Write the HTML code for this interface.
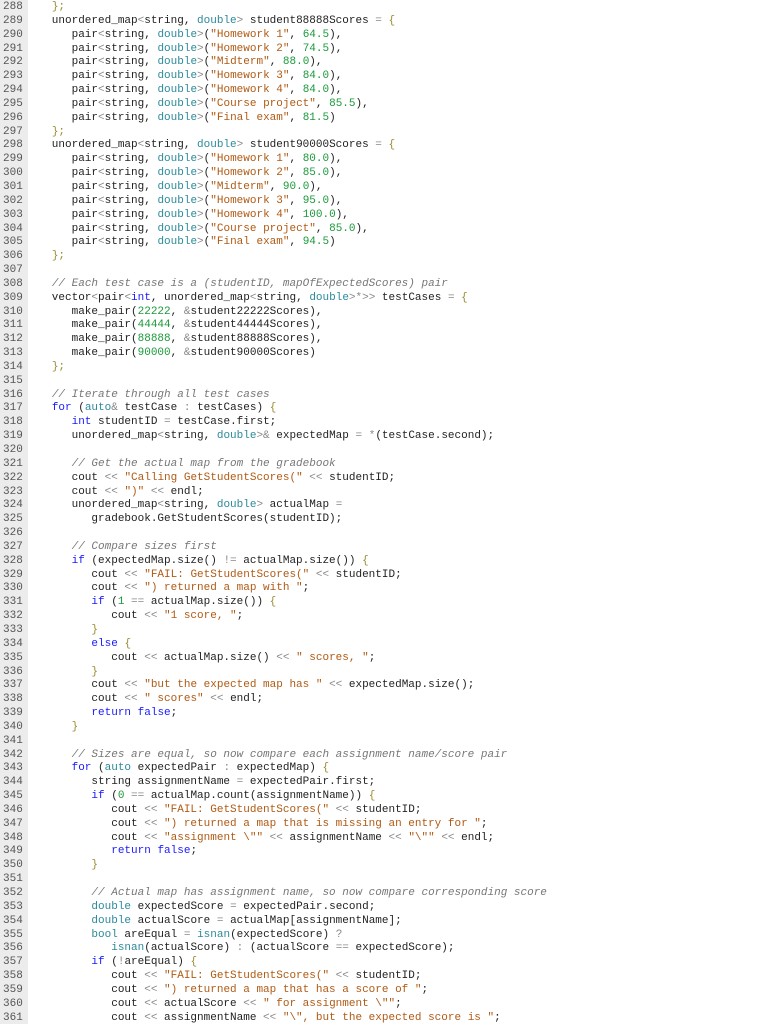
<!DOCTYPE html>
<html><head><meta charset="utf-8"><style>
html,body{margin:0;padding:0;background:#fff;width:768px;height:1024px;overflow:hidden}
.g{position:absolute;left:0;top:0;width:28px;height:1024px;background:#ececec}
pre{position:absolute;top:1px;margin:0;font-family:"Liberation Mono",monospace;font-size:11px;line-height:13.84px;white-space:pre;color:#222}
#ln{left:3px;color:#555}
#code{left:32px}
.k{color:#1a1aff}.t{color:#2b8a9a}.s{color:#b05a14}.n{color:#1a9a3a}.c{color:#777;font-style:italic}.o{color:#888}.p{color:#9a8a30}
</style></head><body><div class="g"></div>
<pre id="ln">288
289
290
291
292
293
294
295
296
297
298
299
300
301
302
303
304
305
306
307
308
309
310
311
312
313
314
315
316
317
318
319
320
321
322
323
324
325
326
327
328
329
330
331
332
333
334
335
336
337
338
339
340
341
342
343
344
345
346
347
348
349
350
351
352
353
354
355
356
357
358
359
360
361</pre>
<pre id="code">   <span class="p">};</span>
   unordered_map<span class="o">&lt;</span>string, <span class="t">double</span><span class="o">&gt;</span> student88888Scores <span class="o">=</span> <span class="p">{</span>
      pair<span class="o">&lt;</span>string, <span class="t">double</span><span class="o">&gt;</span>(<span class="s">"Homework 1"</span>, <span class="n">64.5</span>),
      pair<span class="o">&lt;</span>string, <span class="t">double</span><span class="o">&gt;</span>(<span class="s">"Homework 2"</span>, <span class="n">74.5</span>),
      pair<span class="o">&lt;</span>string, <span class="t">double</span><span class="o">&gt;</span>(<span class="s">"Midterm"</span>, <span class="n">88.0</span>),
      pair<span class="o">&lt;</span>string, <span class="t">double</span><span class="o">&gt;</span>(<span class="s">"Homework 3"</span>, <span class="n">84.0</span>),
      pair<span class="o">&lt;</span>string, <span class="t">double</span><span class="o">&gt;</span>(<span class="s">"Homework 4"</span>, <span class="n">84.0</span>),
      pair<span class="o">&lt;</span>string, <span class="t">double</span><span class="o">&gt;</span>(<span class="s">"Course project"</span>, <span class="n">85.5</span>),
      pair<span class="o">&lt;</span>string, <span class="t">double</span><span class="o">&gt;</span>(<span class="s">"Final exam"</span>, <span class="n">81.5</span>)
   <span class="p">};</span>
   unordered_map<span class="o">&lt;</span>string, <span class="t">double</span><span class="o">&gt;</span> student90000Scores <span class="o">=</span> <span class="p">{</span>
      pair<span class="o">&lt;</span>string, <span class="t">double</span><span class="o">&gt;</span>(<span class="s">"Homework 1"</span>, <span class="n">80.0</span>),
      pair<span class="o">&lt;</span>string, <span class="t">double</span><span class="o">&gt;</span>(<span class="s">"Homework 2"</span>, <span class="n">85.0</span>),
      pair<span class="o">&lt;</span>string, <span class="t">double</span><span class="o">&gt;</span>(<span class="s">"Midterm"</span>, <span class="n">90.0</span>),
      pair<span class="o">&lt;</span>string, <span class="t">double</span><span class="o">&gt;</span>(<span class="s">"Homework 3"</span>, <span class="n">95.0</span>),
      pair<span class="o">&lt;</span>string, <span class="t">double</span><span class="o">&gt;</span>(<span class="s">"Homework 4"</span>, <span class="n">100.0</span>),
      pair<span class="o">&lt;</span>string, <span class="t">double</span><span class="o">&gt;</span>(<span class="s">"Course project"</span>, <span class="n">85.0</span>),
      pair<span class="o">&lt;</span>string, <span class="t">double</span><span class="o">&gt;</span>(<span class="s">"Final exam"</span>, <span class="n">94.5</span>)
   <span class="p">};</span>

   <span class="c">// Each test case is a (studentID, mapOfExpectedScores) pair</span>
   vector<span class="o">&lt;</span>pair<span class="o">&lt;</span><span class="k">int</span>, unordered_map<span class="o">&lt;</span>string, <span class="t">double</span><span class="o">&gt;*&gt;&gt;</span> testCases <span class="o">=</span> <span class="p">{</span>
      make_pair(<span class="n">22222</span>, <span class="o">&amp;</span>student22222Scores),
      make_pair(<span class="n">44444</span>, <span class="o">&amp;</span>student44444Scores),
      make_pair(<span class="n">88888</span>, <span class="o">&amp;</span>student88888Scores),
      make_pair(<span class="n">90000</span>, <span class="o">&amp;</span>student90000Scores)
   <span class="p">};</span>

   <span class="c">// Iterate through all test cases</span>
   <span class="k">for</span> (<span class="t">auto</span><span class="o">&amp;</span> testCase <span class="o">:</span> testCases) <span class="p">{</span>
      <span class="k">int</span> studentID <span class="o">=</span> testCase.first;
      unordered_map<span class="o">&lt;</span>string, <span class="t">double</span><span class="o">&gt;&amp;</span> expectedMap <span class="o">=</span> <span class="o">*</span>(testCase.second);

      <span class="c">// Get the actual map from the gradebook</span>
      cout <span class="o">&lt;&lt;</span> <span class="s">"Calling GetStudentScores("</span> <span class="o">&lt;&lt;</span> studentID;
      cout <span class="o">&lt;&lt;</span> <span class="s">")"</span> <span class="o">&lt;&lt;</span> endl;
      unordered_map<span class="o">&lt;</span>string, <span class="t">double</span><span class="o">&gt;</span> actualMap <span class="o">=</span>
         gradebook.GetStudentScores(studentID);

      <span class="c">// Compare sizes first</span>
      <span class="k">if</span> (expectedMap.size() <span class="o">!=</span> actualMap.size()) <span class="p">{</span>
         cout <span class="o">&lt;&lt;</span> <span class="s">"FAIL: GetStudentScores("</span> <span class="o">&lt;&lt;</span> studentID;
         cout <span class="o">&lt;&lt;</span> <span class="s">") returned a map with "</span>;
         <span class="k">if</span> (<span class="n">1</span> <span class="o">==</span> actualMap.size()) <span class="p">{</span>
            cout <span class="o">&lt;&lt;</span> <span class="s">"1 score, "</span>;
         <span class="p">}</span>
         <span class="k">else</span> <span class="p">{</span>
            cout <span class="o">&lt;&lt;</span> actualMap.size() <span class="o">&lt;&lt;</span> <span class="s">" scores, "</span>;
         <span class="p">}</span>
         cout <span class="o">&lt;&lt;</span> <span class="s">"but the expected map has "</span> <span class="o">&lt;&lt;</span> expectedMap.size();
         cout <span class="o">&lt;&lt;</span> <span class="s">" scores"</span> <span class="o">&lt;&lt;</span> endl;
         <span class="k">return</span> <span class="k">false</span>;
      <span class="p">}</span>

      <span class="c">// Sizes are equal, so now compare each assignment name/score pair</span>
      <span class="k">for</span> (<span class="t">auto</span> expectedPair <span class="o">:</span> expectedMap) <span class="p">{</span>
         string assignmentName <span class="o">=</span> expectedPair.first;
         <span class="k">if</span> (<span class="n">0</span> <span class="o">==</span> actualMap.count(assignmentName)) <span class="p">{</span>
            cout <span class="o">&lt;&lt;</span> <span class="s">"FAIL: GetStudentScores("</span> <span class="o">&lt;&lt;</span> studentID;
            cout <span class="o">&lt;&lt;</span> <span class="s">") returned a map that is missing an entry for "</span>;
            cout <span class="o">&lt;&lt;</span> <span class="s">"assignment \""</span> <span class="o">&lt;&lt;</span> assignmentName <span class="o">&lt;&lt;</span> <span class="s">"\""</span> <span class="o">&lt;&lt;</span> endl;
            <span class="k">return</span> <span class="k">false</span>;
         <span class="p">}</span>

         <span class="c">// Actual map has assignment name, so now compare corresponding score</span>
         <span class="t">double</span> expectedScore <span class="o">=</span> expectedPair.second;
         <span class="t">double</span> actualScore <span class="o">=</span> actualMap[assignmentName];
         <span class="t">bool</span> areEqual <span class="o">=</span> <span class="t">isnan</span>(expectedScore) <span class="o">?</span>
            <span class="t">isnan</span>(actualScore) <span class="o">:</span> (actualScore <span class="o">==</span> expectedScore);
         <span class="k">if</span> (<span class="o">!</span>areEqual) <span class="p">{</span>
            cout <span class="o">&lt;&lt;</span> <span class="s">"FAIL: GetStudentScores("</span> <span class="o">&lt;&lt;</span> studentID;
            cout <span class="o">&lt;&lt;</span> <span class="s">") returned a map that has a score of "</span>;
            cout <span class="o">&lt;&lt;</span> actualScore <span class="o">&lt;&lt;</span> <span class="s">" for assignment \""</span>;
            cout <span class="o">&lt;&lt;</span> assignmentName <span class="o">&lt;&lt;</span> <span class="s">"\", but the expected score is "</span>;</pre>
</body></html>
